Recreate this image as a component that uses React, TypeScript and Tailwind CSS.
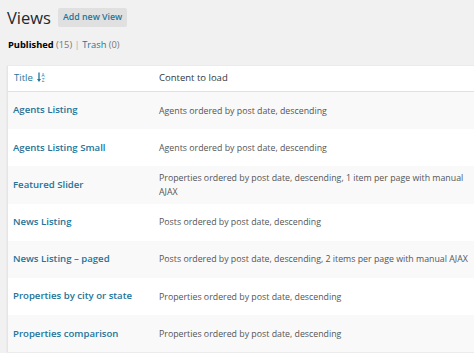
const rows: { title: string; content: string }[] = [
  { title: "Agents Listing", content: "Agents ordered by post date, descending" },
  { title: "Agents Listing Small", content: "Agents ordered by post date, descending" },
  {
    title: "Featured Slider",
    content: "Properties ordered by post date, descending, 1 item per page with manual AJAX",
  },
  { title: "News Listing", content: "Posts ordered by post date, descending" },
  {
    title: "News Listing – paged",
    content: "Posts ordered by post date, descending, 2 items per page with manual AJAX",
  },
  { title: "Properties by city or state", content: "Properties ordered by post date, descending" },
  { title: "Properties comparison", content: "Properties ordered by post date, descending" },
];

function SortIcon() {
  return (
    <svg width="9" height="11" viewBox="0 0 9 11" className="inline-block ml-[4px] -mt-[2px]">
      <path d="M2 0.5v7.5" stroke="#21759b" strokeWidth="1.3" />
      <path d="M0 7l2 3 2-3z" fill="#21759b" />
      <text x="4.6" y="4.6" fontSize="4.8" fill="#21759b" fontFamily="Open Sans">A</text>
      <text x="4.8" y="10.4" fontSize="4.8" fill="#21759b" fontFamily="Open Sans">Z</text>
    </svg>
  );
}

export default function App() {
  return (
    <div className="w-[474px] h-[353px] overflow-hidden bg-[#f1f1f1] font-['Open_Sans',sans-serif]">
      <div className="flex items-center gap-[7px] pl-[7px] pt-[8px] h-[27px]">
        <h1 className="text-[16.5px] leading-[19px] text-[#23282d] font-normal">Views</h1>
        <button className="bg-[#e0e0e0] text-[#21759b] text-[8.8px] font-semibold px-[5px] h-[19px] leading-[19px] rounded-[2px]">
          Add new View
        </button>
      </div>
      <div className="pl-[8px] mt-[11px] h-[14px] leading-[14px] text-[9.3px] text-[#555]">
        <span className="font-bold text-black">Published</span>{" "}
        <span className="text-[#777]">(15)</span> <span className="text-[#aaa]">|</span>{" "}
        <span className="text-[#21759b]">Trash</span> <span className="text-[#777]">(0)</span>
      </div>
      <div className="ml-[7px] mt-[14px] w-[480px] bg-white shadow-[0_0_1px_rgba(0,0,0,0.15)] border-l border-[#e5e5e5]">
        <div className="flex h-[26px] items-center border-b border-[#e1e1e1] text-[9.5px]">
          <div className="w-[151px] shrink-0 pl-[6px] text-[#21759b]">
            Title
            <SortIcon />
          </div>
          <div className="text-[#32373c]">Content to load</div>
        </div>
        {rows.map((r, i) => (
          <div
            key={r.title}
            className={`flex h-[37.2px] items-center ${i % 2 === 0 ? "bg-[#f9f9f9]" : "bg-white"}`}
          >
            <div className="w-[151px] shrink-0 pl-[5px] text-[9.6px] font-semibold text-[#21759b] whitespace-nowrap">
              {r.title}
            </div>
            <div className="w-[316px] text-[8.8px] leading-[14px] text-[#555]">{r.content}</div>
          </div>
        ))}
      </div>
    </div>
  );
}
